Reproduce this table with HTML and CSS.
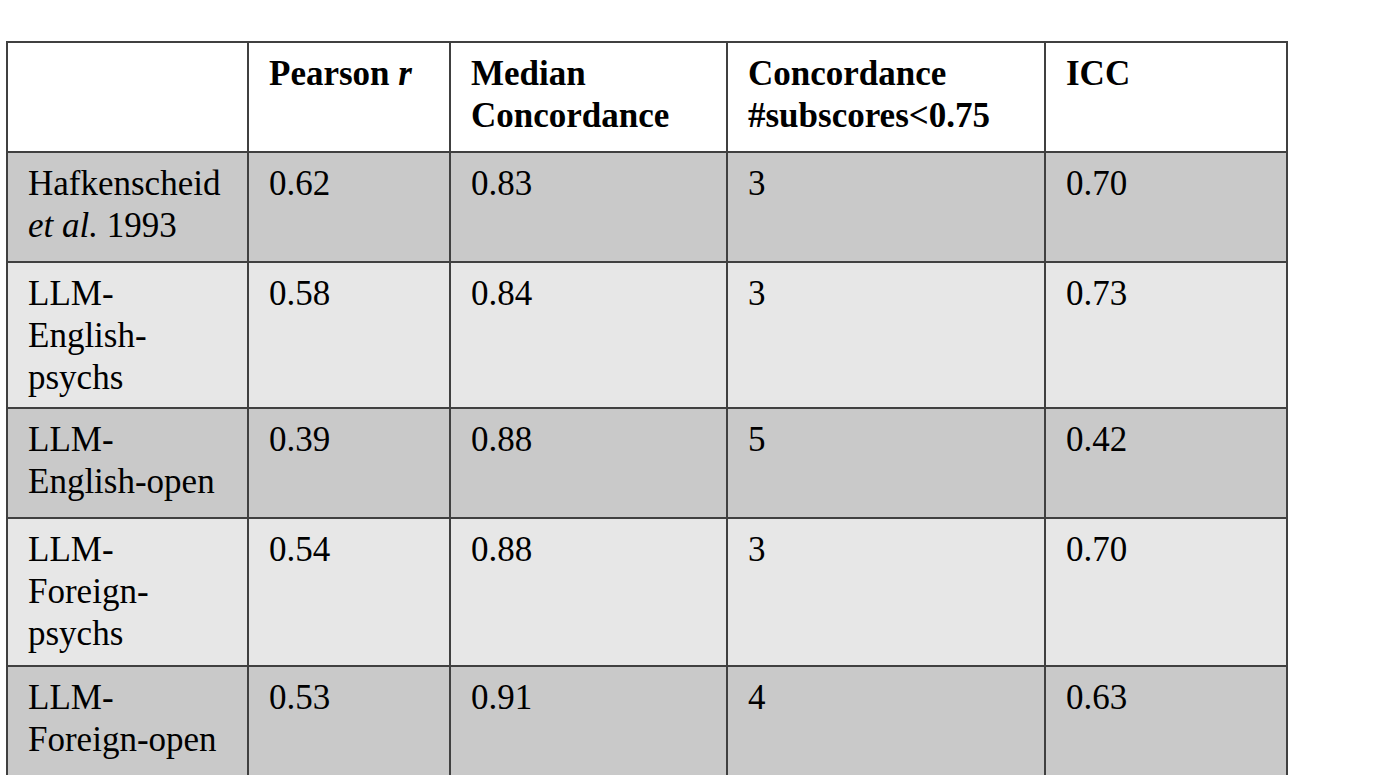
FILE: index.html
```html
<!DOCTYPE html>
<html>
<head>
<meta charset="utf-8">
<link rel="stylesheet" href="styles.css">
</head>
<body>
<div class="page">
<table class="results">
  <colgroup>
    <col class="c1"><col class="c2"><col class="c3"><col class="c4"><col class="c5">
  </colgroup>
  <thead>
    <tr class="head">
      <th></th>
      <th>Pearson <i>r</i></th>
      <th>Median Concordance</th>
      <th>Concordance #subscores&lt;0.75</th>
      <th>ICC</th>
    </tr>
  </thead>
  <tbody>
    <tr class="dark h2">
      <td>Hafkenscheid <i>et al.</i> 1993</td><td>0.62</td><td>0.83</td><td>3</td><td>0.70</td>
    </tr>
    <tr class="light h3a">
      <td>LLM-<br>English-<br>psychs</td><td>0.58</td><td>0.84</td><td>3</td><td>0.73</td>
    </tr>
    <tr class="dark h2">
      <td>LLM-<br>English-open</td><td>0.39</td><td>0.88</td><td>5</td><td>0.42</td>
    </tr>
    <tr class="light h3b">
      <td>LLM-<br>Foreign-<br>psychs</td><td>0.54</td><td>0.88</td><td>3</td><td>0.70</td>
    </tr>
    <tr class="dark h2">
      <td>LLM-<br>Foreign-open</td><td>0.53</td><td>0.91</td><td>4</td><td>0.63</td>
    </tr>
  </tbody>
</table>
</div>
</body>
</html>
```

FILE: styles.css
```css
html, body {
  margin: 0;
  padding: 0;
  background: #ffffff;
}
.page {
  padding: 41px 0 0 6px;
}
.results {
  border-collapse: collapse;
  table-layout: fixed;
  width: 1282px;
  font-family: "Liberation Serif", "Times New Roman", serif;
  font-size: 35px;
  line-height: 42px;
  color: #000;
}
.c1 { width: 241px; }
.c2 { width: 202px; }
.c3 { width: 277px; }
.c4 { width: 318px; }
.c5 { width: 242px; }
.results th,
.results td {
  border: 2px solid #404040;
  padding: 10px 16px 0 20px;
  vertical-align: top;
  text-align: left;
}
.results th {
  font-weight: bold;
}
.head { height: 110px; background: #ffffff; }
.h2 { height: 110px; }
.h3a { height: 146px; }
.h3b { height: 148px; }
.dark { background: #c9c9c9; }
.light { background: #e7e7e7; }
```
